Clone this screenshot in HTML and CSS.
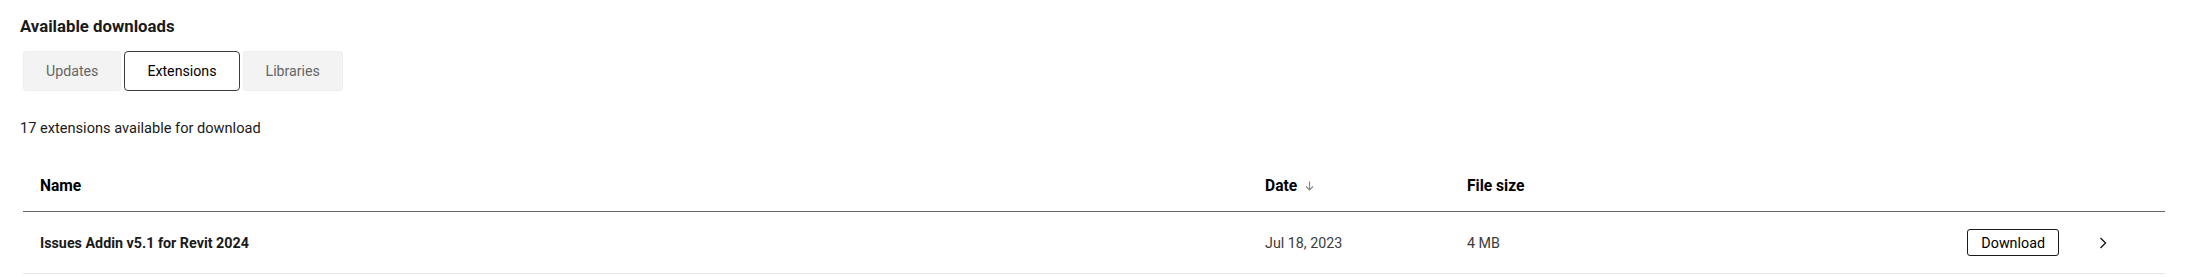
FILE: index.html
```html
<!DOCTYPE html>
<html lang="en">
<head>
    <meta charset="UTF-8">
    <meta name="viewport" content="width=device-width, initial-scale=1.0">
    <title>Available downloads</title>
    <link rel="stylesheet" href="styles.css">
</head>
<body>
    <div class="page">
        <h2 class="title">Available downloads</h2>
        <div class="tabs">
            <button class="tab">Updates</button>
            <button class="tab active">Extensions</button>
            <button class="tab">Libraries</button>
        </div>
        <p class="count">17 extensions available for download</p>

        <div class="table">
            <div class="row head">
                <div class="cell">Name</div>
                <div class="cell">Date <span class="sort">
                    <svg width="9" height="10" viewBox="0 0 9 10"><path d="M4.5 0.5v8.5M1 5.5l3.5 3.5 3.5-3.5" fill="none" stroke="#888" stroke-width="1.2"/></svg>
                </span></div>
                <div class="cell">File size</div>
                <div class="cell"></div>
                <div class="cell"></div>
            </div>
            <div class="row item">
                <div class="cell name">Issues Addin v5.1 for Revit 2024</div>
                <div class="cell">Jul 18, 2023</div>
                <div class="cell">4 MB</div>
                <div class="cell"><button class="download">Download</button></div>
                <div class="cell more">
                    <svg width="8" height="12" viewBox="0 0 8 12"><path d="M1.5 1l5 5-5 5" fill="none" stroke="#1a1a1a" stroke-width="1.4"/></svg>
                </div>
            </div>
        </div>
    </div>
</body>
</html>
```

FILE: styles.css
```css
body {
    margin: 0;
    font-family: Roboto, "Noto Sans", sans-serif;
    color: #1a1a1a;
    background: #fff;
}

.page {
    padding: 12px 28px 0 20px;
}

.title {
    margin: 0;
    font-size: 16.75px;
    font-weight: 700;
    line-height: 28px;
}

.tabs {
    display: flex;
    gap: 3px;
    margin: 11px 0 0 3px;
}

.tab {
    height: 40px;
    padding: 0 22px;
    font-family: inherit;
    font-size: 14.2px;
    color: #666;
    background-color: #f3f3f3;
    border: 1px solid #eeeeee;
    border-radius: 3px;
}

.tab.active {
    color: #000;
    background-color: #fff;
    border-color: #3c3c3c;
    border-radius: 4px;
}

.count {
    margin: 26px 0 0;
    font-size: 14.6px;
    line-height: 22px;
}

.table {
    margin: 32px 0 0 3px;
}

.row {
    display: grid;
    grid-template-columns: 1225px 202px 1fr auto 106px;
    align-items: center;
}

.row.head {
    height: 40px;
    border-bottom: 1px solid #666;
    font-size: 15.6px;
    font-weight: 700;
    color: #000;
}

.row.item {
    height: 61px;
    border-bottom: 1px solid #e5e5e5;
    font-size: 14.3px;
    color: #3c3c3c;
}

.cell {
    padding-left: 17px;
}

.row.head .cell {
    padding-bottom: 10px;
}

.cell.name {
    font-weight: 700;
    color: #1a1a1a;
}

.sort {
    margin-left: 4px;
}

.download {
    height: 27px;
    padding: 0 13px;
    font-family: inherit;
    font-size: 14.3px;
    color: #000;
    background: #fff;
    border: 1px solid #1a1a1a;
    border-radius: 3px;
}

.row .cell:nth-child(4) {
    padding-left: 0;
}

.more {
    padding-left: 40px;
    display: flex;
    align-items: center;
}
```
